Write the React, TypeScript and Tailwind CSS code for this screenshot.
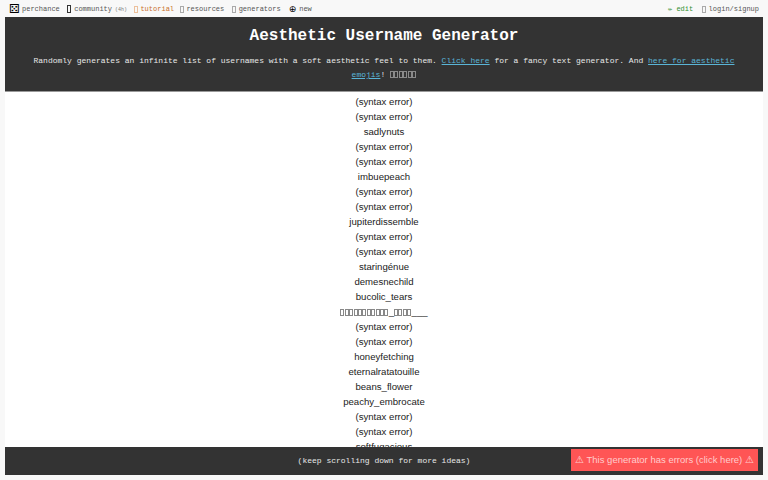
import React from "react";

const Tofu = ({ className = "" }: { className?: string }) => (
  <span className={`inline-block align-[-1px] w-[4px] h-[7px] mr-[0.4px] border-[0.5px] border-current ${className}`} />
);

const names = [
  "(syntax error)",
  "(syntax error)",
  "sadlynuts",
  "(syntax error)",
  "(syntax error)",
  "imbuepeach",
  "(syntax error)",
  "(syntax error)",
  "jupiterdissemble",
  "(syntax error)",
  "(syntax error)",
  "staringénue",
  "demesnechild",
  "bucolic_tears",
  "tofu",
  "(syntax error)",
  "(syntax error)",
  "honeyfetching",
  "eternalratatouille",
  "beans_flower",
  "peachy_embrocate",
  "(syntax error)",
  "(syntax error)",
  "softfugacious",
  "(syntax error)",
];

const App: React.FunctionComponent = () => {
  return (
    <div className="h-screen flex flex-col overflow-hidden bg-[#f8f8f8] font-['Liberation_Mono',monospace]">
      <nav className="h-[17px] shrink-0 flex items-center justify-between pt-[1px] pl-[9px] pr-[9px] text-[7px] text-[#555]">
        <div className="flex items-center">
          <span className="text-[12px] leading-none text-black w-[13px] font-['DejaVu_Sans',sans-serif]">⚄</span>
          <span>perchance</span>
          <Tofu className="ml-[7px] w-[3px] h-[8px] text-[#333]" />
          <span className="ml-[3px]">community</span>
          <span className="ml-[3px] mt-[3px] text-[5px] leading-[7px] text-[#777]">(4h)</span>
          <Tofu className="ml-[7px] w-[3px] h-[6px] text-[#ecc09c]" />
          <span className="ml-[2px] text-[#c9712e]">tutorial</span>
          <Tofu className="ml-[6px] w-[3px] h-[6px] text-[#aaa]" />
          <span className="ml-[2px]">resources</span>
          <Tofu className="ml-[8px] w-[3px] h-[6px] text-[#aaa]" />
          <span className="ml-[2px]">generators</span>
          <span className="ml-[8px] text-[9px] leading-none text-black font-['DejaVu_Sans',sans-serif]">⊕</span>
          <span className="ml-[3px]">new</span>
        </div>
        <div className="flex items-center">
          <span className="text-[#2f8f2f]">✏ edit</span>
          <Tofu className="ml-[9px] w-[3px] h-[6px] text-[#aaa]" />
          <span className="ml-[2px]">login/signup</span>
        </div>
      </nav>
      <div className="flex-1 min-h-0 mx-[5px] flex flex-col">
        <header className="h-[75px] shrink-0 bg-[#333] border-b border-[#999] text-center text-[#e8e8e8] px-[24px]">
          <h1 className="mt-[10px] text-[16px] leading-[18px] font-bold text-white">Aesthetic Username Generator</h1>
          <p className="mt-[9px] text-[8px] leading-[14px]">
            Randomly generates an infinite list of usernames with a soft aesthetic feel to them.{" "}
            <a className="underline text-[#5ab4d6]">Click here</a> for a fancy text generator. And{" "}
            <a className="underline text-[#5ab4d6]">here for aesthetic emojis</a>!{" "}
            {[0, 1, 2, 3, 4, 5].map((i) => (
              <Tofu key={i} className="text-[#8a8a8a]" />
            ))}
          </p>
        </header>
        <main className="flex-1 min-h-0 overflow-hidden bg-white pt-[2px] text-center font-['Liberation_Sans',sans-serif] text-[9.6px] leading-[15px] text-[#222]">
          {names.map((name, index) =>
            name === "tofu" ? (
              <div key={index}>
                {[0, 1, 2, 3, 4, 5, 6, 7, 8, 9, 10].map((i) => (
                  <Tofu key={i} className="text-[#888]" />
                ))}
                _
                {[0, 1, 2, 3].map((i) => (
                  <Tofu key={i} className="text-[#888]" />
                ))}
                ___
              </div>
            ) : (
              <div key={index}>{name}</div>
            )
          )}
        </main>
        <footer className="h-[28px] shrink-0 bg-[#333] flex items-center justify-center relative text-[8px] text-[#e8e8e8]">
          <span>(keep scrolling down for more ideas)</span>
          <button className="absolute right-[5px] top-[2px] h-[22px] w-[187px] bg-[#f55] text-[#fcc] font-['Liberation_Sans',sans-serif] text-[9.5px]">
            ⚠ This generator has errors (click here) ⚠
          </button>
        </footer>
        <div className="h-[5px] shrink-0" />
      </div>
    </div>
  );
};

export default App;
